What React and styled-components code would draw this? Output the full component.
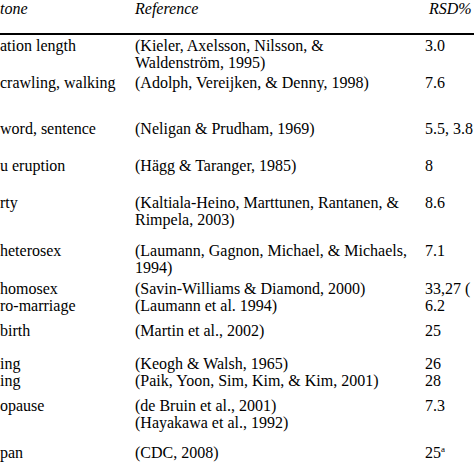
import React from "react";
import styled, { createGlobalStyle } from "styled-components";

const SERIF = "'Liberation Serif', serif";

const Global = createGlobalStyle`
  html, body { margin: 0; padding: 0; background: #fff; overflow: hidden; }
  body { width: 474px; height: 474px; }
`;

const Table = styled.div`
  font-size: 16px;
  line-height: 17px;
  color: #000;
  width: 520px;
`;

const Row = styled.div`
  display: grid;
  grid-template-columns: 135px 290px 1fr;
  padding-top: ${(p) => p.$gap || 0}px;
`;

const HeadRow = styled(Row)`
  font-style: italic;
  padding-bottom: 16px;
  border-bottom: 2px solid #000;
`;

const Cell = styled.div`
  white-space: nowrap;
  font-family: ${(p) => p.$f || SERIF};
  padding-left: ${(p) => p.$indent || 0}px;
`;

const Sup = styled.sup`
  font-size: 9px;
  vertical-align: 6px;
  line-height: 0;
`;

const rows = [
  { m: "ation length", r: ["(Kieler, Axelsson, Nilsson, &", "Waldenström, 1995)"], v: "3.0", gap: 1.5 },
  { m: "crawling, walking", r: ["(Adolph, Vereijken, & Denny, 1998)"], v: "7.6", gap: 3 },
  { m: "word, sentence", r: ["(Neligan & Prudham, 1969)"], v: "5.5, 3.8", gap: 29 },
  { m: "u eruption", r: ["(Hägg & Taranger, 1985)"], v: "8", gap: 20 },
  { m: "rty", r: ["(Kaltiala-Heino, Marttunen, Rantanen, &", "Rimpela, 2003)"], v: "8.6", gap: 20 },
  { m: "heterosex", r: ["(Laumann, Gagnon, Michael, & Michaels,", "1994)"], v: "7.1", gap: 14 },
  { m: "homosex", r: ["(Savin-Williams & Diamond, 2000)"], v: "33,27 (", gap: 4 },
  { m: "ro-marriage", r: ["(Laumann et al. 1994)"], v: "6.2", gap: 0 },
  { m: "birth", r: ["(Martin et al., 2002)"], v: "25", gap: 8 },
  { m: "ing", r: ["(Keogh & Walsh, 1965)"], v: "26", gap: 16 },
  { m: "ing", r: ["(Paik, Yoon, Sim, Kim, & Kim, 2001)"], v: "28", gap: 0 },
  { m: "opause", r: ["(de Bruin et al., 2001)", "(Hayakawa et al., 1992)"], v: "7.3", gap: 8 },
  { m: "pan", r: ["(CDC, 2008)"], v: <>25<Sup>a</Sup></>, gap: 13 },
];

export default function App() {
  return (
    <>
      <Global />
      <Table>
        <HeadRow>
          <Cell $f={SERIF}>tone</Cell>
          <Cell $f={SERIF}>Reference</Cell>
          <Cell $f={SERIF} $indent={4}>RSD%</Cell>
        </HeadRow>
        {rows.map((row, i) => (
          <Row key={i} $gap={row.gap}>
            <Cell $f={SERIF}>{row.m}</Cell>
            <Cell $f={SERIF}>
              {row.r.map((l, j) => (
                <div key={j}>{l}</div>
              ))}
            </Cell>
            <Cell $f={SERIF}>{row.v}</Cell>
          </Row>
        ))}
      </Table>
    </>
  );
}
